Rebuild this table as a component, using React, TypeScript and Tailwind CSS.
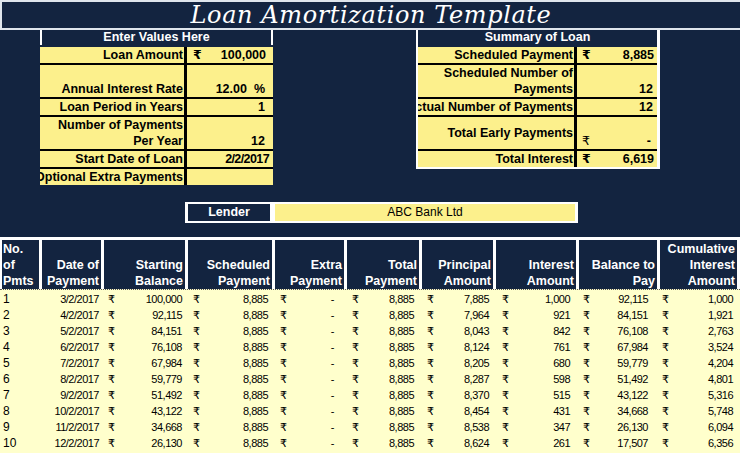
import React from 'react';

const rows: string[][] = [
  ['1', '3/2/2017', '100,000', '8,885', '-', '8,885', '7,885', '1,000', '92,115', '1,000'],
  ['2', '4/2/2017', '92,115', '8,885', '-', '8,885', '7,964', '921', '84,151', '1,921'],
  ['3', '5/2/2017', '84,151', '8,885', '-', '8,885', '8,043', '842', '76,108', '2,763'],
  ['4', '6/2/2017', '76,108', '8,885', '-', '8,885', '8,124', '761', '67,984', '3,524'],
  ['5', '7/2/2017', '67,984', '8,885', '-', '8,885', '8,205', '680', '59,779', '4,204'],
  ['6', '8/2/2017', '59,779', '8,885', '-', '8,885', '8,287', '598', '51,492', '4,801'],
  ['7', '9/2/2017', '51,492', '8,885', '-', '8,885', '8,370', '515', '43,122', '5,316'],
  ['8', '10/2/2017', '43,122', '8,885', '-', '8,885', '8,454', '431', '34,668', '5,748'],
  ['9', '11/2/2017', '34,668', '8,885', '-', '8,885', '8,538', '347', '26,130', '6,094'],
  ['10', '12/2/2017', '26,130', '8,885', '-', '8,885', '8,624', '261', '17,507', '6,356'],
];

const headers: string[][] = [
  ['No.', 'of', 'Pmts'],
  ['', 'Date of', 'Payment'],
  ['', 'Starting', 'Balance'],
  ['', 'Scheduled', 'Payment'],
  ['', 'Extra', 'Payment'],
  ['', 'Total', 'Payment'],
  ['', 'Principal', 'Amount'],
  ['', 'Interest', 'Amount'],
  ['', 'Balance to', 'Pay'],
  ['Cumulative', 'Interest', 'Amount'],
];

const moneyPad = [
  '',
  '',
  'pl-[4px] pr-[3px]',
  'pl-[5px] pr-[4px]',
  'pl-[5px] pr-[8px]',
  'pl-[5px] pr-[5px]',
  'pl-[5px] pr-[4px]',
  'pl-[6px] pr-[6px]',
  'pl-[4px] pr-[9px]',
  'pl-[2px] pr-[4px]',
];

const GRID =
  'grid grid-cols-[37px_59px_81px_84px_69px_72px_71px_80px_78px_77px] gap-x-[3px] pl-[2px] pr-[3px]';

export default function App() {
  return (
    <div className="w-[740px] h-[453px] overflow-hidden bg-[#132440] font-['Liberation_Sans','DejaVu_Sans',sans-serif] text-black">
      {/* Title */}
      <div className="h-[30px] border-t-2 border-l-2 border-b-2 border-[#dfe5ec] flex items-center justify-center">
        <span className="font-['DejaVu_Serif',serif] italic text-[24px] leading-[26px] text-white tracking-[0.6px]">
          Loan Amortization Template
        </span>
      </div>

      {/* Boxes */}
      <div className="flex h-[172px]">
        {/* Left box */}
        <div className="ml-[40px] w-[233px] flex flex-col">
          <div className="h-[15px] bg-[#132440] border-x-2 border-white text-white font-bold text-[12.5px] leading-[15px] text-center">
            Enter Values Here
          </div>
          <div className="h-[2px]" />
          <div className="bg-black flex flex-col gap-y-[2px] text-[12.5px] font-bold">
            <div className="grid grid-cols-[144px_86px] gap-x-[3px] h-[16px] leading-[16px]">
              <div className="bg-[#fcf08c] text-right pr-[1px] whitespace-nowrap">Loan Amount</div>
              <div className="bg-[#fcf08c] flex justify-between pl-[6px] pr-[7px]">
                <span>₹</span>
                <span>100,000</span>
              </div>
            </div>
            <div className="grid grid-cols-[144px_86px] gap-x-[3px] h-[32px] leading-[16px]">
              <div className="bg-[#fcf08c] text-right pr-[1px] flex flex-col justify-end whitespace-nowrap">Annual Interest Rate</div>
              <div className="bg-[#fcf08c] flex justify-end items-end pr-[8px]">
                <span>12.00&nbsp;&nbsp;%</span>
              </div>
            </div>
            <div className="grid grid-cols-[144px_86px] gap-x-[3px] h-[16px] leading-[16px]">
              <div className="bg-[#fcf08c] text-right pr-[1px] whitespace-nowrap">Loan Period in Years</div>
              <div className="bg-[#fcf08c] text-right pr-[8px]">1</div>
            </div>
            <div className="grid grid-cols-[144px_86px] gap-x-[3px] h-[32px] leading-[16px]">
              <div className="bg-[#fcf08c] text-right pr-[1px] flex flex-col justify-end whitespace-nowrap">
                <span>Number of Payments</span>
                <span>Per Year</span>
              </div>
              <div className="bg-[#fcf08c] flex justify-end items-end pr-[8px]">12</div>
            </div>
            <div className="grid grid-cols-[144px_86px] gap-x-[3px] h-[16px] leading-[16px]">
              <div className="bg-[#fcf08c] text-right pr-[1px] whitespace-nowrap">Start Date of Loan</div>
              <div className="bg-[#fcf08c] text-right pr-[4px] tracking-[-0.6px]">2/2/2017</div>
            </div>
            <div className="grid grid-cols-[144px_86px] gap-x-[3px] h-[16px] leading-[16px]">
              <div className="bg-[#fcf08c] pr-[1px] whitespace-nowrap overflow-hidden flex justify-end">
                <span>Optional Extra Payments</span>
              </div>
              <div className="bg-[#fcf08c]" />
            </div>
          </div>
        </div>

        {/* Right box */}
        <div className="ml-[143px] w-[244px] self-start border-l-2 border-r-[3px] border-b-2 border-white flex flex-col">
          <div className="h-[15px] bg-[#132440] text-white font-bold text-[12.5px] leading-[15px] text-center">
            Summary of Loan
          </div>
          <div className="h-[2px] bg-[#132440]" />
          <div className="bg-black flex flex-col gap-y-[2px] text-[12.5px] font-bold">
            <div className="grid grid-cols-[156px_80px] gap-x-[3px] h-[16px] leading-[16px]">
              <div className="bg-[#fcf08c] text-right pr-[1px] whitespace-nowrap">Scheduled Payment</div>
              <div className="bg-[#fcf08c] flex justify-between pl-[5px] pr-[3px]">
                <span>₹</span>
                <span>8,885</span>
              </div>
            </div>
            <div className="grid grid-cols-[156px_80px] gap-x-[3px] h-[32px] leading-[16px]">
              <div className="bg-[#fcf08c] text-right pr-[1px] flex flex-col justify-end whitespace-nowrap">
                <span>Scheduled Number of</span>
                <span>Payments</span>
              </div>
              <div className="bg-[#fcf08c] flex justify-end items-end pr-[4px]">12</div>
            </div>
            <div className="grid grid-cols-[156px_80px] gap-x-[3px] h-[16px] leading-[16px]">
              <div className="bg-[#fcf08c] pr-[1px] whitespace-nowrap overflow-hidden flex justify-end">
                <span>Actual Number of Payments</span>
              </div>
              <div className="bg-[#fcf08c] text-right pr-[4px]">12</div>
            </div>
            <div className="grid grid-cols-[156px_80px] gap-x-[3px] h-[32px] leading-[16px]">
              <div className="bg-[#fcf08c] text-right pr-[1px] flex flex-col justify-center whitespace-nowrap">Total Early Payments</div>
              <div className="bg-[#fcf08c] flex justify-between items-end pl-[5px] pr-[6px] font-normal">
                <span>₹</span>
                <span className="font-bold">-</span>
              </div>
            </div>
            <div className="grid grid-cols-[156px_80px] gap-x-[3px] h-[16px] leading-[16px]">
              <div className="bg-[#fcf08c] text-right pr-[1px] whitespace-nowrap">Total Interest</div>
              <div className="bg-[#fcf08c] flex justify-between pl-[5px] pr-[3px]">
                <span>₹</span>
                <span>6,619</span>
              </div>
            </div>
          </div>
        </div>
      </div>

      {/* Lender */}
      <div className="ml-[185px] w-[393px] h-[21px] bg-white pt-[2px] pb-[2px] pl-[3px] pr-[3px] flex gap-x-[5px]">
        <div className="w-[82px] bg-[#132440] text-white font-bold text-[12.5px] leading-[17px] text-center">Lender</div>
        <div className="flex-1 bg-[#fcf08c] text-[12px] leading-[17px] text-center">ABC Bank Ltd</div>
      </div>

      <div className="h-[14px]" />

      {/* Table header */}
      <div className={`${GRID} bg-white pt-[3px]`}>
        {headers.map((h, i) => (
          <div
            key={i}
            className={`h-[49px] bg-[#132440] text-white font-bold text-[12.5px] leading-[16px] flex flex-col justify-end whitespace-nowrap ${
              i === 0 ? 'items-start pl-[1px]' : 'items-end pr-[2px]'
            }`}
          >
            {h.map((l, j) => (
              <span key={j} className="h-[16px]">
                {l}
              </span>
            ))}
          </div>
        ))}
      </div>

      {/* Table body */}
      <div className="bg-[#ffffcc] border-t border-dotted border-[#555] pt-[1px] h-[200px]">
        {rows.map((r, ri) => (
          <div key={ri} className={`${GRID} h-[16px] text-[11px] leading-[16px] tracking-[-0.5px]`}>
            {r.map((c, ci) => {
              if (ci === 0) return <div key={ci} className="pl-[1px] text-[12px] tracking-normal">{c}</div>;
              if (ci === 1) return <div key={ci} className="text-right pr-[2px]">{c}</div>;
              return (
                <div key={ci} className={`flex justify-between ${moneyPad[ci]}`}>
                  <span>₹</span>
                  <span className={c === '-' ? 'pr-[2px]' : ''}>{c}</span>
                </div>
              );
            })}
          </div>
        ))}
      </div>
    </div>
  );
}
